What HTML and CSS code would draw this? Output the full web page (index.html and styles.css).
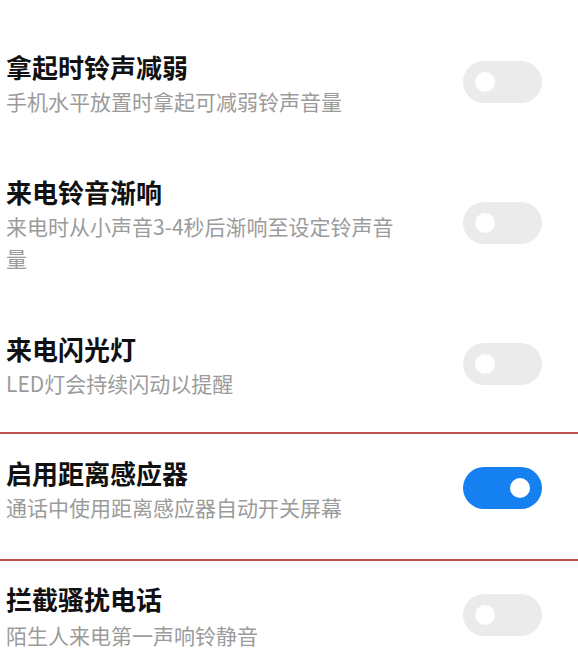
FILE: index.html
```html
<!DOCTYPE html>
<html lang="zh-CN">
<head>
<meta charset="utf-8">
<title>设置</title>
<link rel="stylesheet" href="styles.css">
</head>
<body>
<div class="list">
  <div class="row">
    <div class="text">
      <div class="title">拿起时铃声减弱</div>
      <div class="sub">手机水平放置时拿起可减弱铃声音量</div>
    </div>
    <div class="toggle"><span class="knob"></span></div>
  </div>
  <div class="row">
    <div class="text">
      <div class="title">来电铃音渐响</div>
      <div class="sub">来电时从小声音3-4秒后渐响至设定铃声音量</div>
    </div>
    <div class="toggle"><span class="knob"></span></div>
  </div>
  <div class="row row-before">
    <div class="text">
      <div class="title">来电闪光灯</div>
      <div class="sub">LED灯会持续闪动以提醒</div>
    </div>
    <div class="toggle"><span class="knob"></span></div>
  </div>
  <div class="row row-marked">
    <div class="text">
      <div class="title">启用距离感应器</div>
      <div class="sub">通话中使用距离感应器自动开关屏幕</div>
    </div>
    <div class="toggle on"><span class="knob"></span></div>
  </div>
  <div class="row row-after">
    <div class="text">
      <div class="title">拦截骚扰电话</div>
      <div class="sub">陌生人来电第一声响铃静音</div>
    </div>
    <div class="toggle"><span class="knob"></span></div>
  </div>
</div>
</body>
</html>
```
FILE: styles.css
```css
html, body {
  margin: 0;
  padding: 0;
  background: #ffffff;
}
body {
  font-family: "Noto Sans CJK SC", "Noto Sans", sans-serif;
}
.list {
  padding-top: 21px;
}
.row {
  display: flex;
  align-items: center;
  padding: 28px 36px 29px 6px;
  gap: 60px;
}
.text {
  flex: 1;
  min-width: 0;
}
.title {
  font-size: 26px;
  line-height: 36px;
  font-weight: 600;
  color: #111111;
}
.sub {
  font-size: 21px;
  line-height: 32px;
  color: #9b9b9b;
}
.toggle {
  flex: none;
  width: 79px;
  height: 42px;
  border-radius: 21px;
  background: #ebebeb;
  display: flex;
  align-items: center;
  padding: 0 12px;
  box-sizing: border-box;
  margin-bottom: 3px;
}
.knob {
  width: 20px;
  height: 20px;
  border-radius: 50%;
  background: #ffffff;
}
.toggle.on {
  background: #1580f0;
  justify-content: flex-end;
}
.row-before {
  padding-bottom: 33px;
}
.row-marked {
  border-top: 2px solid #bf4f4f;
  border-bottom: 2px solid #bf4f4f;
  padding-top: 21px;
  padding-bottom: 36px;
}
.row-after {
  padding-top: 20px;
}
.row-after .sub {
  margin-top: 2px;
}
```
